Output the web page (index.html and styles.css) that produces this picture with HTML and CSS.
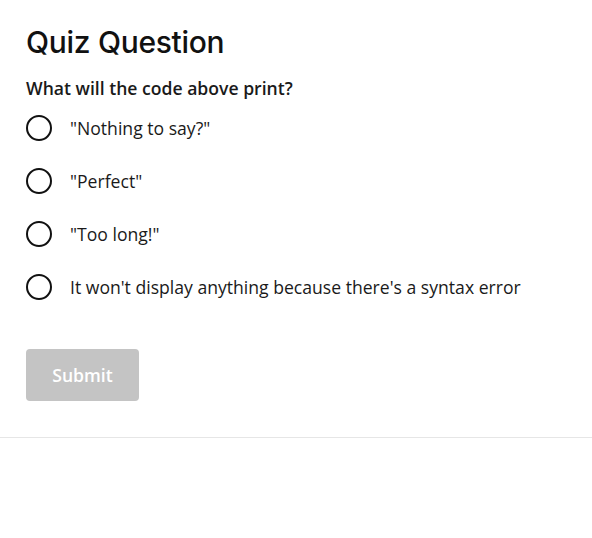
FILE: index.html
```html
<!DOCTYPE html>
<html lang="en">
  <head>
    <meta charset="UTF-8" />
    <meta name="viewport" content="width=device-width, initial-scale=1.0" />
    <title>Quiz Question</title>
    <link rel="stylesheet" href="styles.css">
  </head>
  <body>
    <main class="quiz">
      <h2 class="title">Quiz Question</h2>
      <p class="question">What will the code above print?</p>
      <ul class="options">
        <li class="option"><span class="radio"></span>"Nothing to say?"</li>
        <li class="option"><span class="radio"></span>"Perfect"</li>
        <li class="option"><span class="radio"></span>"Too long!"</li>
        <li class="option"><span class="radio"></span>It won't display anything because there's a syntax error</li>
      </ul>
      <button class="submit" disabled>Submit</button>
    </main>
    <hr class="divider">
  </body>
</html>
```

FILE: styles.css
```css
body {
  margin: 0;
  font-family: "Open Sans", sans-serif;
  color: #1a1a1a;
  background: #fff;
}

.quiz {
  padding: 24px 26px 36px;
}

.title {
  margin: 0;
  font-family: Inter, sans-serif;
  font-weight: 500;
  font-size: 30px;
  line-height: 36px;
  letter-spacing: -0.3px;
  color: #111;
}

.question {
  margin: 16px 0 1px;
  font-size: 17.6px;
  font-weight: 600;
  line-height: 24px;
}

.options {
  list-style: none;
  margin: 0;
  padding: 0;
}

.option {
  display: flex;
  align-items: center;
  gap: 18px;
  height: 53px;
  font-size: 17.6px;
}

.radio {
  width: 22px;
  height: 22px;
  border: 2px solid #111;
  border-radius: 50%;
  flex-shrink: 0;
}

.submit {
  margin-top: 36px;
  width: 113px;
  height: 52px;
  border: none;
  border-radius: 4px;
  background-color: #c4c4c4;
  color: #fff;
  font-family: "Open Sans", sans-serif;
  font-size: 17.6px;
  font-weight: 600;
}

.divider {
  margin: 0;
  border: none;
  border-top: 1px solid #e6e6e6;
}
```
